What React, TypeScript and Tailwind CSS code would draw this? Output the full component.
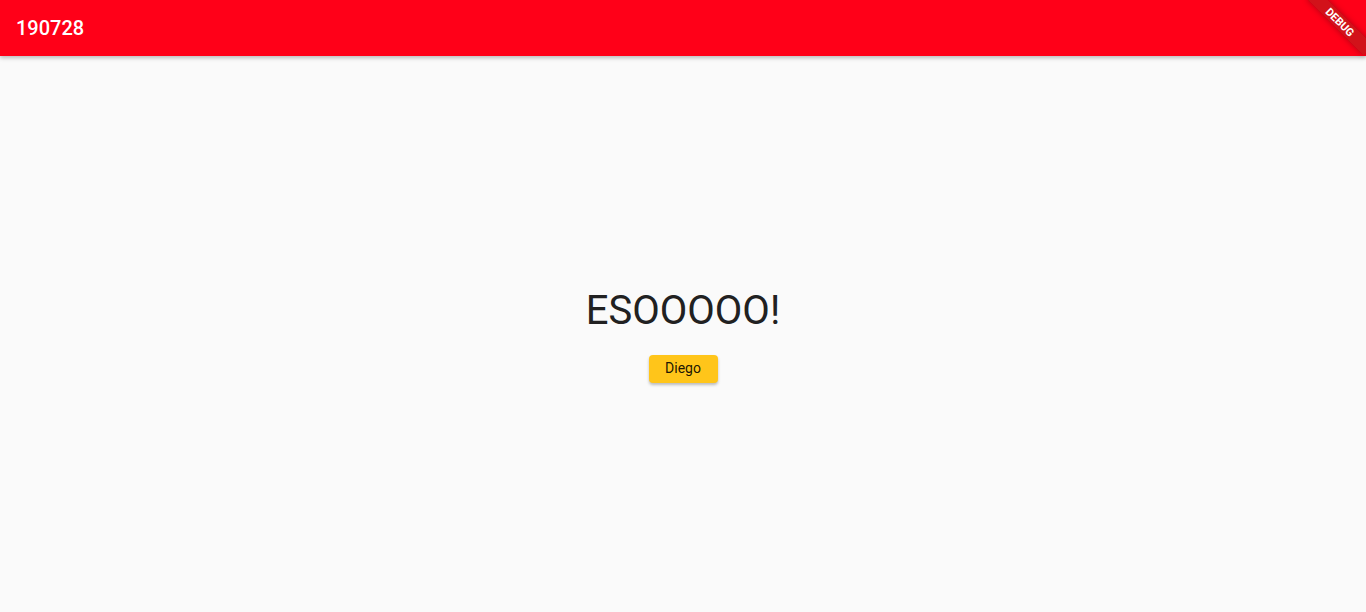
import React from 'react';

const App: React.FC = () => {
  return (
    <div className="relative flex h-[612px] w-full flex-col overflow-hidden bg-[#fafafa] font-['Roboto',sans-serif]">
      <header className="relative z-10 flex h-14 shrink-0 items-center bg-[#ff0018] px-4 shadow-[0_2px_4px_rgba(0,0,0,0.25)]">
        <h1 className="text-[20px] font-medium leading-none text-white">190728</h1>
      </header>

      <main className="flex flex-1 flex-col items-center justify-center">
        <p className="mt-[1px] text-[40px] leading-[47px] text-[#212121]">ESOOOOO!</p>
        <button className="mt-[21px] h-7 w-[69px] rounded-[4px] bg-[#ffc51a] text-[14px] text-black/90 shadow-[0_2px_3px_rgba(0,0,0,0.25)]">
          Diego
        </button>
      </main>

      {/* debug banner */}
      <div className="pointer-events-none absolute right-[-14px] top-[15px] z-20 flex h-[14px] w-20 rotate-45 items-center justify-center bg-[#b71c1c]/[0.63] shadow-[0_0_6px_rgba(0,0,0,0.3)]">
        <span className="text-[11px] font-bold leading-none text-white">DEBUG</span>
      </div>
    </div>
  );
};

export default App;
